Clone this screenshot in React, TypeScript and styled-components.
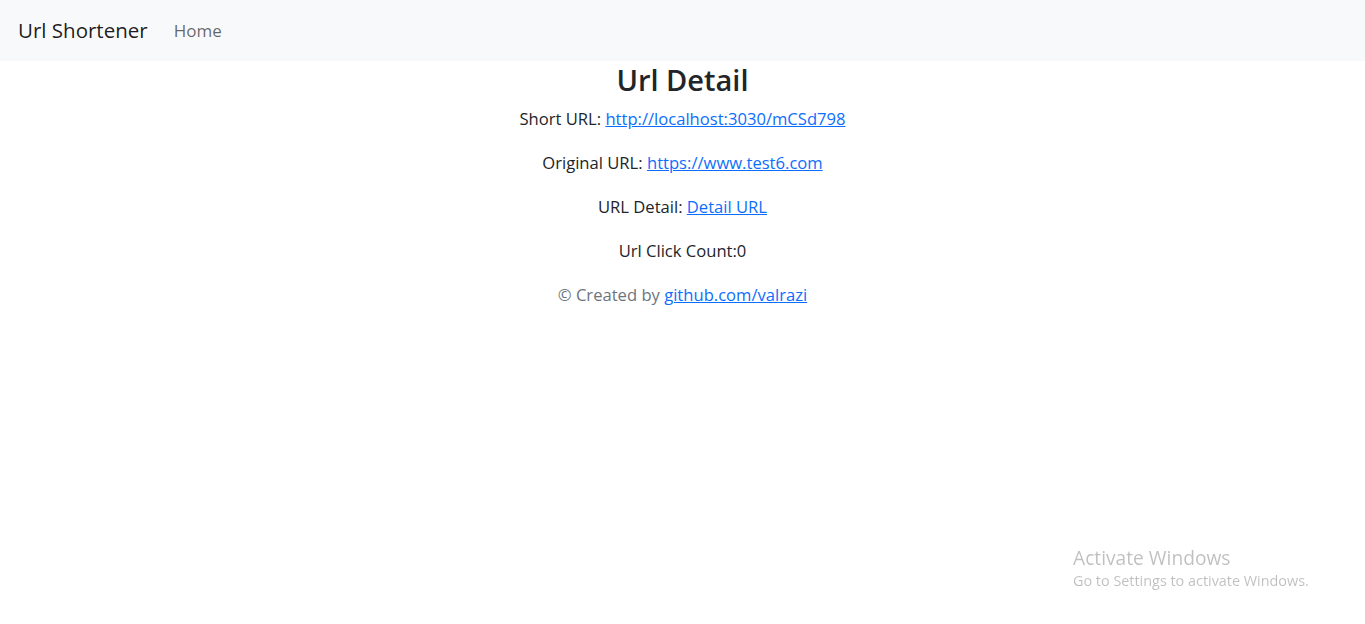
import styled, { createGlobalStyle } from "styled-components";

const GlobalStyle = createGlobalStyle`
  body {
    margin: 0;
    font-family: "Open Sans", "Noto Sans", "Liberation Sans", sans-serif;
    font-size: 16px;
    line-height: 1.5;
    color: #212529;
    background: #ffffff;
  }
`

const NavBar = styled.nav`
  display: flex;
  align-items: center;
  height: 61px;
  padding: 0 18px;
  background-color: #f8f9fa;
`

const Brand = styled.a`
  font-size: 20.5px;
  color: rgba(0, 0, 0, 0.9);
  text-decoration: none;
  margin-right: 26px;
`

const NavLink = styled.a`
  font-size: 17px;
  color: rgba(0, 0, 0, 0.6);
  text-decoration: none;
`

const Main = styled.main`
  display: flex;
  flex-direction: column;
  align-items: center;
  text-align: center;
`

const Title = styled.h1`
  font-size: 29px;
  font-weight: 600;
  line-height: 1.2;
  margin: 2px 0 9px;
`

const Line = styled.p<{ muted?: boolean }>`
  margin: 0 0 20px;
  font-size: 16.6px;
  line-height: 24px;
  color: ${props => props.muted ? '#6c757d' : '#212529'};
`

const Link = styled.a`
  color: #0d6efd;
  text-decoration: underline;
`

const Watermark = styled.div`
  position: fixed;
  left: 1073px;
  top: 545px;
  color: rgba(0, 0, 0, 0.25);
  pointer-events: none;
`

const WatermarkTitle = styled.div`
  font-size: 19.2px;
  line-height: 26px;
`

const WatermarkText = styled.div`
  font-size: 14.4px;
  line-height: 20px;
`

export default function App() {
  return (
    <>
      <GlobalStyle />
      <NavBar>
        <Brand href="#">Url Shortener</Brand>
        <NavLink href="#">Home</NavLink>
      </NavBar>
      <Main>
        <Title>Url Detail</Title>
        <Line>Short URL: <Link href="#">http://localhost:3030/mCSd798</Link></Line>
        <Line>Original URL: <Link href="#">https://www.test6.com</Link></Line>
        <Line>URL Detail: <Link href="#">Detail URL</Link></Line>
        <Line>Url Click Count:0</Line>
        <Line muted>© Created by <Link href="#">github.com/valrazi</Link></Line>
      </Main>
      <Watermark>
        <WatermarkTitle>Activate Windows</WatermarkTitle>
        <WatermarkText>Go to Settings to activate Windows.</WatermarkText>
      </Watermark>
    </>
  )
}
